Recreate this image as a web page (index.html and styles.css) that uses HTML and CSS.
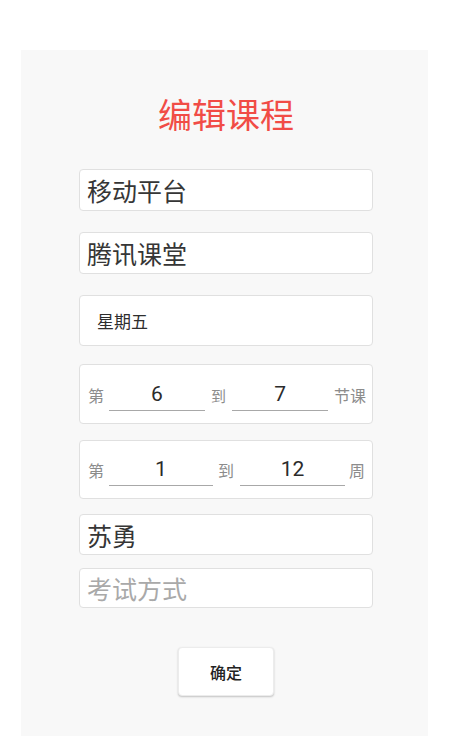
FILE: index.html
```html
<!DOCTYPE html>
<html lang="zh-CN">
<head>
<meta charset="utf-8">
<title>编辑课程</title>
<link rel="stylesheet" href="styles.css">
</head>
<body>
<div class="dialog">
  <div class="title">编辑课程</div>
  <div class="field big f1">移动平台</div>
  <div class="field big f2">腾讯课堂</div>
  <div class="field day">星期五</div>
  <div class="field range r1">
    <span class="lab l-first">第</span>
    <span class="num n1">6</span>
    <span class="lab l-to">到</span>
    <span class="num n2">7</span>
    <span class="lab l-end">节课</span>
  </div>
  <div class="field range r2">
    <span class="lab l-first">第</span>
    <span class="num n3">1</span>
    <span class="lab l-to2">到</span>
    <span class="num n4">12</span>
    <span class="lab l-end2">周</span>
  </div>
  <div class="field big f3">苏勇</div>
  <div class="field big f4 placeholder">考试方式</div>
  <div class="btn">确定</div>
</div>
</body>
</html>
```
FILE: styles.css
```css
html, body {
  margin: 0;
  padding: 0;
  background: #ffffff;
}
body {
  font-family: Roboto, "Noto Sans CJK SC", sans-serif;
  color: #333333;
}
.dialog {
  margin: 50px 0 0 21px;
  width: 407px;
  height: 686px;
  box-sizing: border-box;
  background: #f8f8f8;
  padding: 46px 0 0 58px;
  display: flex;
  flex-direction: column;
  align-items: flex-start;
}
.title {
  width: 294px;
  text-align: center;
  font-size: 34px;
  line-height: 40px;
  color: #f14c46;
}
.field {
  width: 294px;
  box-sizing: border-box;
  background: #ffffff;
  border: 1px solid #e0e0e0;
  border-radius: 4px;
  display: flex;
  align-items: center;
}
.big {
  height: 42px;
  font-size: 25px;
  padding-left: 7px;
  color: #363636;
}
.f1 { margin-top: 33px; }
.f2 { margin-top: 21px; }
.day {
  margin-top: 21px;
  height: 51px;
  font-size: 17px;
  padding-left: 17px;
  color: #2e2e2e;
}
.range {
  align-items: flex-end;
  padding-left: 8px;
}
.r1 { margin-top: 18px; height: 60px; padding-bottom: 12px; }
.r2 { margin-top: 16px; height: 59px; padding-bottom: 12px; }
.lab {
  font-size: 16px;
  line-height: 16px;
  color: #8c8c8c;
  margin-bottom: 6px;
}
.num {
  height: 28px;
  box-sizing: border-box;
  border-bottom: 1px solid #a8a8a8;
  display: flex;
  justify-content: center;
  align-items: flex-end;
  font-size: 21px;
  line-height: 21px;
  padding-bottom: 5px;
  color: #2b2b2b;
}
.n1 { width: 96px; margin-left: 5px; }
.l-to { margin-left: 6px; font-size: 15px; }
.n2 { width: 96px; margin-left: 6px; }
.l-end { margin-left: 6px; }
.n3 { width: 104px; margin-left: 5px; }
.l-to2 { margin-left: 5px; }
.n4 { width: 105px; margin-left: 6px; }
.l-end2 { margin-left: 4px; }
.f3 { margin-top: 15px; height: 41px; }
.f4 { margin-top: 13px; height: 40px; }
.placeholder { color: #a9a9a9; }
.btn {
  margin-top: 39px;
  margin-left: 99px;
  width: 96px;
  height: 49px;
  box-sizing: border-box;
  background: #ffffff;
  border: 1px solid #ececec;
  border-radius: 4px;
  box-shadow: 0 1px 2px rgba(0, 0, 0, 0.22);
  display: flex;
  align-items: center;
  justify-content: center;
  font-size: 16px;
  font-weight: 500;
  color: #222222;
}
```
